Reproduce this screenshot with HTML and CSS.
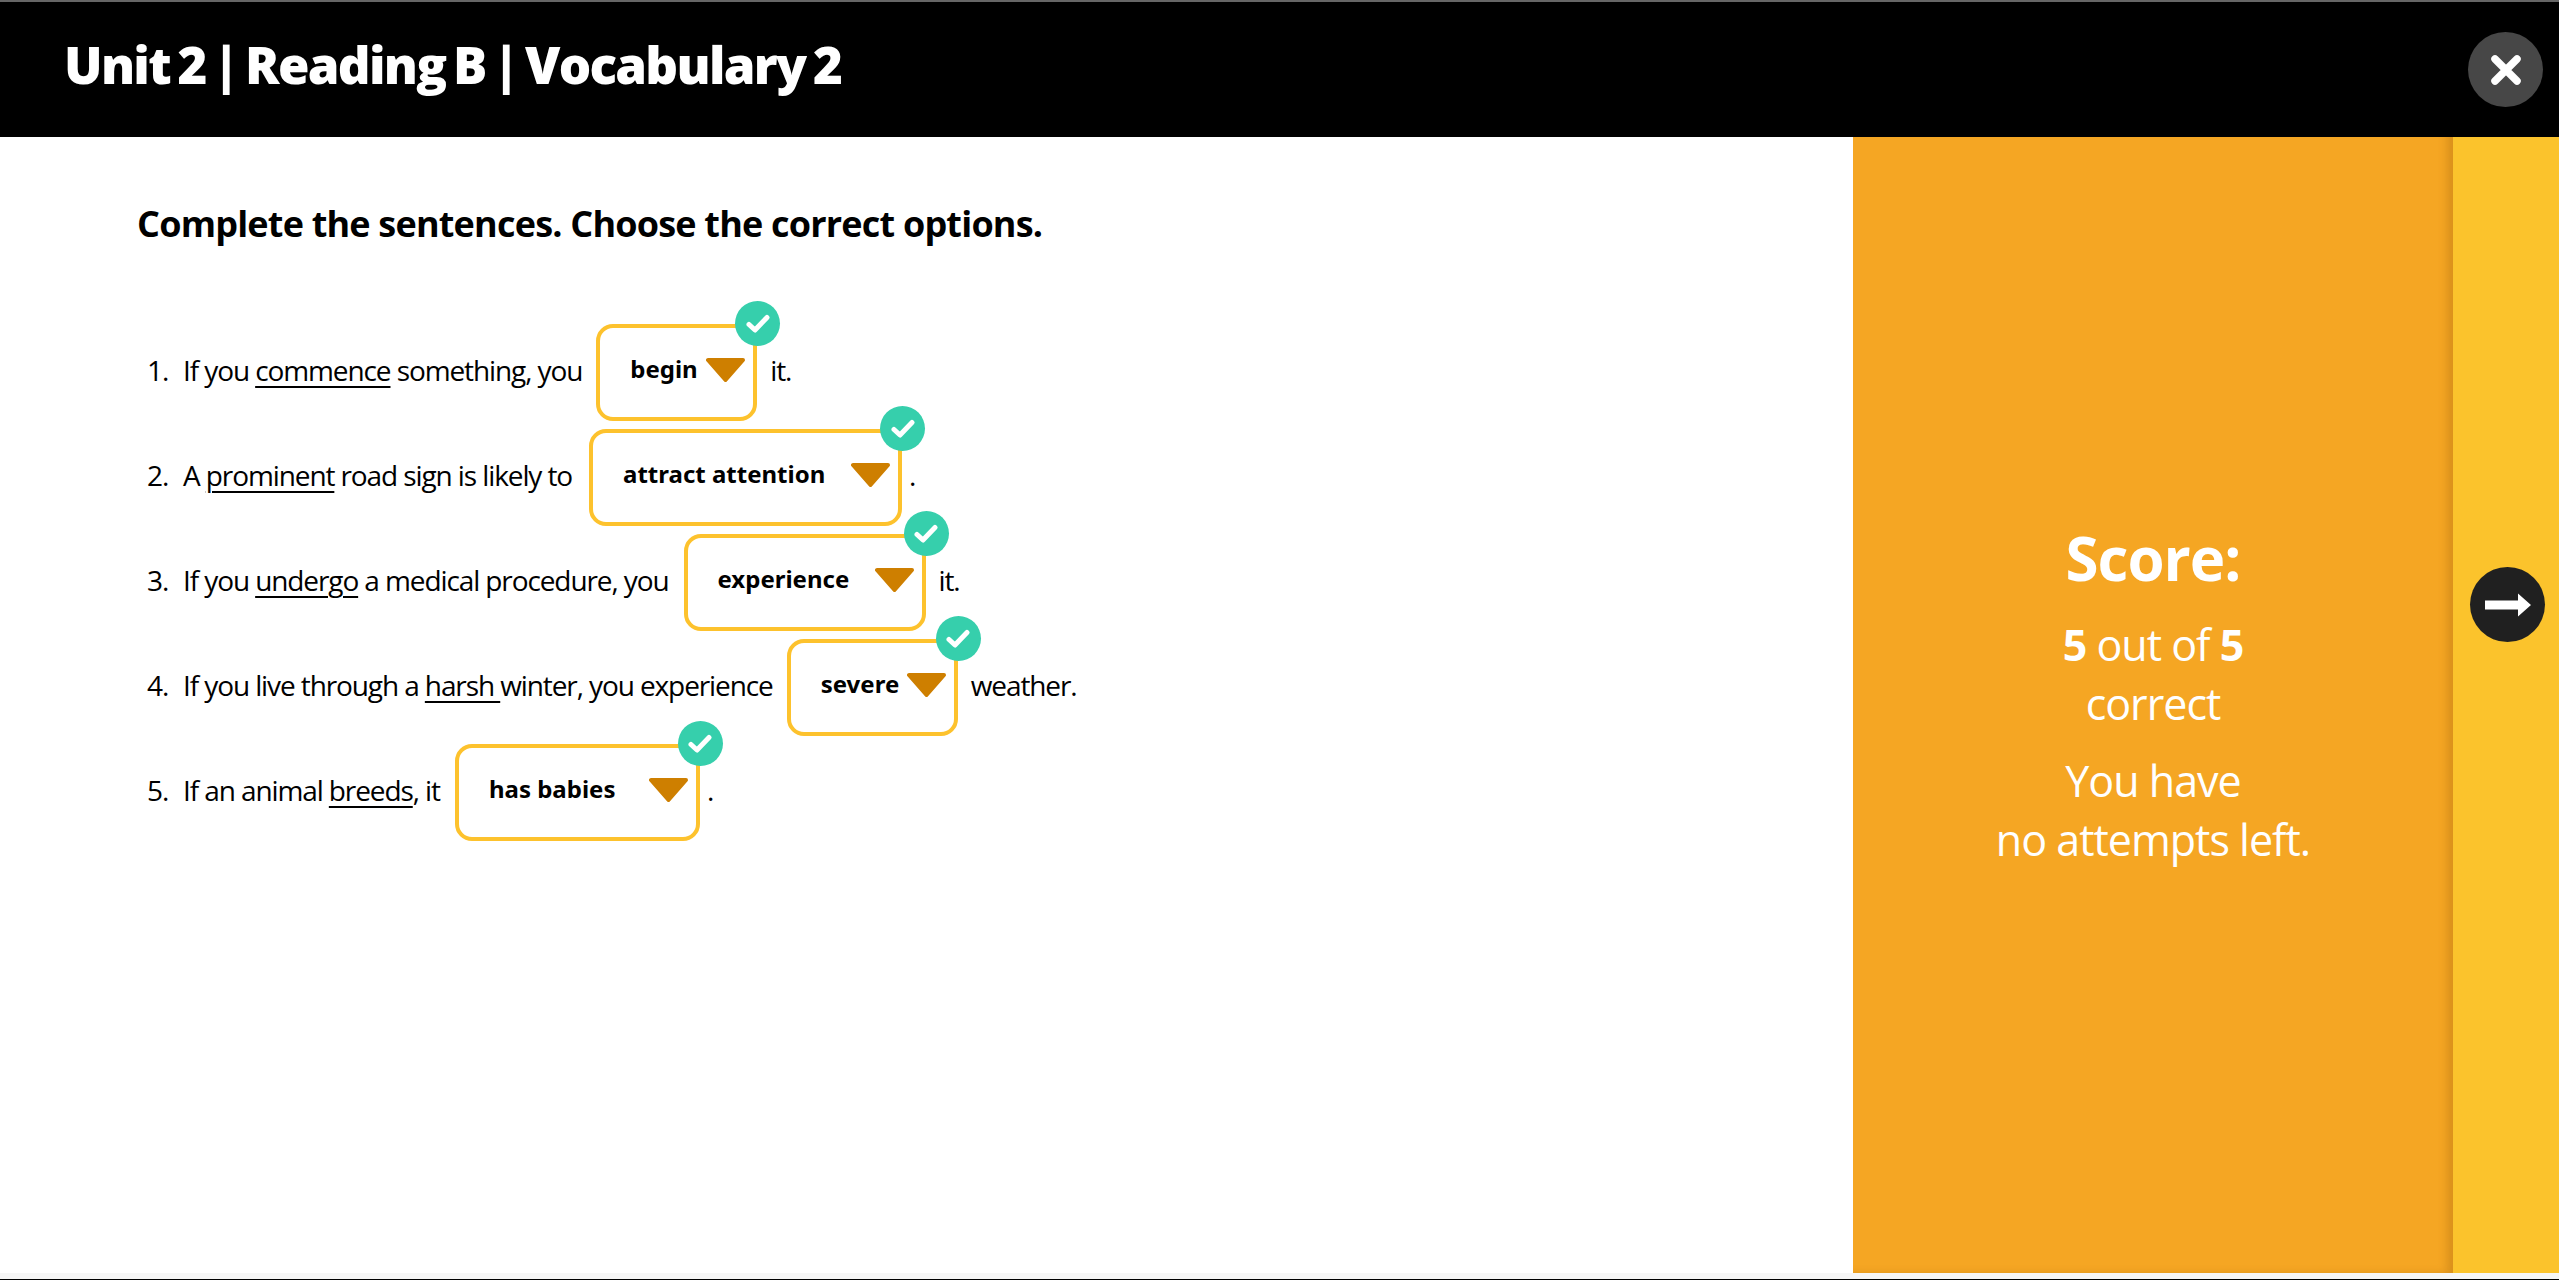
FILE: index.html
```html
<!DOCTYPE html>
<html lang="en">
<head>
<meta charset="utf-8">
<title>Unit 2 | Reading B | Vocabulary 2</title>
<link rel="stylesheet" href="styles.css">
</head>
<body>
<div class="page">
  <header class="topbar">
    <h1 class="title">Unit 2 | Reading B | Vocabulary 2</h1>
    <button class="close" aria-label="Close">
      <svg width="30" height="30" viewBox="0 0 30 30"><path d="M4 4L26 26M26 4L4 26" stroke="#fff" stroke-width="7.5" stroke-linecap="round"/></svg>
    </button>
  </header>
  <main class="main">
    <section class="activity">
      <h2 class="heading">Complete the sentences. Choose the correct options.</h2>
      <ol class="questions">
        <li class="row">
          <span class="num">1.</span>
          <span class="text">If you <u>commence</u> something, you</span>
          <span class="select w1"><span>begin</span><svg class="caret" viewBox="0 0 39 24"><path d="M2 2H37L19.5 22Z" fill="#ce7f00" stroke="#ce7f00" stroke-width="4" stroke-linejoin="round"/></svg><span class="badge"><svg width="24" height="20" viewBox="0 0 24 20"><path d="M3 10.5L9 16L21 3.5" fill="none" stroke="#fff" stroke-width="5" stroke-linecap="round" stroke-linejoin="round"/></svg></span></span>
          <span class="text">it.</span>
        </li>
        <li class="row">
          <span class="num">2.</span>
          <span class="text">A <u>prominent</u> road sign is likely to</span>
          <span class="select w2"><span>attract attention</span><svg class="caret" viewBox="0 0 39 24"><path d="M2 2H37L19.5 22Z" fill="#ce7f00" stroke="#ce7f00" stroke-width="4" stroke-linejoin="round"/></svg><span class="badge"><svg width="24" height="20" viewBox="0 0 24 20"><path d="M3 10.5L9 16L21 3.5" fill="none" stroke="#fff" stroke-width="5" stroke-linecap="round" stroke-linejoin="round"/></svg></span></span>
          <span class="text dot">.</span>
        </li>
        <li class="row">
          <span class="num">3.</span>
          <span class="text">If you <u>undergo</u> a medical procedure, you</span>
          <span class="select w3"><span>experience</span><svg class="caret" viewBox="0 0 39 24"><path d="M2 2H37L19.5 22Z" fill="#ce7f00" stroke="#ce7f00" stroke-width="4" stroke-linejoin="round"/></svg><span class="badge"><svg width="24" height="20" viewBox="0 0 24 20"><path d="M3 10.5L9 16L21 3.5" fill="none" stroke="#fff" stroke-width="5" stroke-linecap="round" stroke-linejoin="round"/></svg></span></span>
          <span class="text">it.</span>
        </li>
        <li class="row">
          <span class="num">4.</span>
          <span class="text">If you live through a <u>harsh </u>winter, you experience</span>
          <span class="select w4"><span>severe</span><svg class="caret" viewBox="0 0 39 24"><path d="M2 2H37L19.5 22Z" fill="#ce7f00" stroke="#ce7f00" stroke-width="4" stroke-linejoin="round"/></svg><span class="badge"><svg width="24" height="20" viewBox="0 0 24 20"><path d="M3 10.5L9 16L21 3.5" fill="none" stroke="#fff" stroke-width="5" stroke-linecap="round" stroke-linejoin="round"/></svg></span></span>
          <span class="text">weather.</span>
        </li>
        <li class="row">
          <span class="num">5.</span>
          <span class="text">If an animal <u>breeds</u>, it</span>
          <span class="select w5"><span>has babies</span><svg class="caret" viewBox="0 0 39 24"><path d="M2 2H37L19.5 22Z" fill="#ce7f00" stroke="#ce7f00" stroke-width="4" stroke-linejoin="round"/></svg><span class="badge"><svg width="24" height="20" viewBox="0 0 24 20"><path d="M3 10.5L9 16L21 3.5" fill="none" stroke="#fff" stroke-width="5" stroke-linecap="round" stroke-linejoin="round"/></svg></span></span>
          <span class="text dot">.</span>
        </li>
      </ol>
    </section>
    <aside class="score">
      <h3 class="score-title">Score:</h3>
      <p class="score-line"><b>5</b> out of <b>5</b><br>correct</p>
      <p class="score-line">You have<br>no attempts left.</p>
    </aside>
    <nav class="next-strip">
      <button class="next" aria-label="Next">
        <svg width="46" height="24" viewBox="0 0 46 24"><path d="M0 7.5H33V0.5L46 12L33 23.5V16.5H0Z" fill="#fff"/></svg>
      </button>
    </nav>
  </main>
  <div class="foot"></div>
</div>
</body>
</html>
```

FILE: styles.css
```css
* { box-sizing: border-box; }
html, body { margin: 0; padding: 0; height: 100%; overflow: hidden; }
body { background: #f6f6f6; font-family: "Open Sans", "Noto Sans", sans-serif; color: #000; }
.page { height: 1280px; display: flex; flex-direction: column; }

.topbar {
  height: 137px; flex: none; background: #000; border-top: 2px solid #666;
  display: flex; justify-content: space-between; align-items: flex-start;
  padding: 0 16px 0 64px;
}
.title { margin: 30px 0 0; font-size: 51px; line-height: 64px; font-weight: 800; color: #fff; letter-spacing: -1.7px; word-spacing: -4px; white-space: nowrap; }
.close {
  width: 75px; height: 75px; margin-top: 30px; border: 0; padding: 0; border-radius: 50%;
  background: #474747; display: flex; align-items: center; justify-content: center;
}

.main { height: 1136px; flex: none; display: flex; }
.activity { width: 1853px; flex: none; background: #fff; padding: 63px 0 0 137px; }
.heading { margin: 0 0 72px; font-size: 36px; line-height: 48px; font-weight: 700; letter-spacing: -0.8px; white-space: nowrap; }
.questions { list-style: none; margin: 0; padding: 0 0 0 10px; }
.row { height: 105px; display: flex; align-items: center; font-size: 28px; letter-spacing: -1.1px; white-space: nowrap; }
.num { width: 36px; flex: none; position: relative; top: -3px; }
.text { line-height: 40px; position: relative; top: -3px; }
.text u { text-decoration-thickness: 2px; text-underline-offset: 5px; }
.dot { margin-left: -6px; }

.select {
  position: relative; height: 97px; flex: none; margin: 0 13px 0 14px;
  border: 4px solid #fdc22d; border-radius: 17px; background: #fff;
  display: flex; align-items: center; justify-content: space-between;
  padding: 0 8px 9px 30px; font-size: 24px; font-weight: 700; letter-spacing: 0; font-family: "Noto Sans", sans-serif;
}
.w1 { width: 161px; }
.w2 { width: 313px; margin-left: 17px; }
.w3 { width: 242px; margin-left: 15px; }
.w4 { width: 171px; }
.w5 { width: 245px; margin-left: 15px; }
.caret { width: 39px; height: 24px; flex: none; margin-top: 4px; }
.badge {
  position: absolute; top: -27px; right: -27px; width: 45px; height: 45px; border-radius: 50%;
  background: #36cfac; display: flex; align-items: center; justify-content: center;
}

.score {
  width: 600px; flex: none; background: #f5a623; color: #fff; text-align: center;
  box-shadow: inset -12px -5px 8px -6px rgba(120,70,0,.22);
  display: flex; flex-direction: column; justify-content: center; padding-bottom: 24px;
}
.score-title { margin: 0 0 17px; font-size: 60px; line-height: 80px; font-weight: 700; letter-spacing: -1px; }
.score-line { margin: 0 0 18px; font-size: 43px; line-height: 59px; letter-spacing: -1px; }
.score-line b { font-weight: 700; }
.score-line:last-child { margin-bottom: 0; }

.next-strip { flex: 1; background: #fbc32c; padding: 430px 0 0 17px; }
.next {
  width: 75px; height: 75px; border: 0; padding: 0; border-radius: 50%;
  background: #202020; display: flex; align-items: center; justify-content: center;
}

.foot { flex: 1; border-bottom: 1px solid #000; }
```
